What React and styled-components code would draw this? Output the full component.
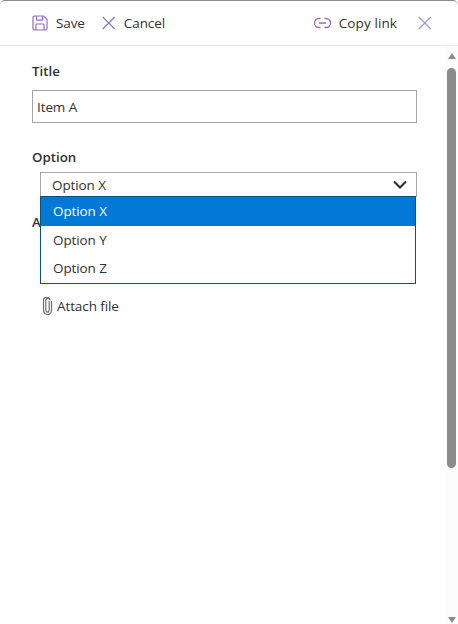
import React from 'react';
import styled, { createGlobalStyle } from 'styled-components';

const GlobalStyle = createGlobalStyle`
  html, body {
    margin: 0;
    padding: 0;
    background: #fff;
  }
  body {
    font-family: "Open Sans", "Noto Sans", "Liberation Sans", sans-serif;
    color: #323130;
  }
`;

const Panel = styled.div`
  width: 458px;
  height: 624px;
  box-sizing: border-box;
  background: #fff;
  border-top: 1px solid #8a8a8a;
  border-radius: 5px 5px 0 0;
  display: flex;
  flex-direction: column;
  overflow: hidden;
`;

const Toolbar = styled.div`
  height: 45px;
  flex: none;
  box-sizing: border-box;
  border-bottom: 1px solid #e8e8e8;
  padding: 0 26px 0 32px;
  display: flex;
  align-items: center;
  justify-content: space-between;
`;

const ToolGroup = styled.div`
  display: flex;
  align-items: center;
`;

const ToolButton = styled.div`
  display: flex;
  align-items: center;
  gap: 8px;
  margin-right: ${(p) => p.$after || 0}px;
  font-size: 13.5px;
  letter-spacing: ${(p) => p.$spacing || -0.1}px;
  line-height: 18px;
  color: #323130;
`;

const Body = styled.div`
  flex: 1;
  display: flex;
  min-height: 0;
`;

const Content = styled.div`
  flex: 1;
  box-sizing: border-box;
  padding: 16px 28px 0 32px;
`;

const Label = styled.div`
  font-size: 13.3px;
  font-weight: 600;
  line-height: 18px;
  color: #323130;
`;

const TextInput = styled.div`
  margin-top: 10px;
  height: 33px;
  box-sizing: border-box;
  border: 1px solid #a6a6a6;
  padding: 0 4px;
  display: flex;
  align-items: center;
  font-size: 13.5px;
  letter-spacing: -0.1px;
  color: #323130;
`;

const OptionField = styled.div`
  margin-top: 25px;
`;

const SelectWrap = styled.div`
  position: relative;
  margin: 6px 0 0 8px;
`;

const SelectBox = styled.div`
  height: 25px;
  box-sizing: border-box;
  border: 1px solid #a6a6a6;
  padding: 0 9px 0 11px;
  display: flex;
  align-items: center;
  justify-content: space-between;
  font-size: 13.5px;
  letter-spacing: -0.1px;
  color: #323130;
`;

const DropList = styled.ul`
  position: absolute;
  top: 24px;
  left: 0;
  right: 1px;
  margin: 0;
  padding: 0;
  list-style: none;
  background: #fff;
  border: 1px solid #05527f;
  box-sizing: border-box;
  height: 88px;
  z-index: 5;
`;

const DropItem = styled.li`
  height: ${(p) => (p.$selected ? 29 : 28)}px;
  box-sizing: border-box;
  padding-left: 12px;
  padding-bottom: 1px;
  display: flex;
  align-items: center;
  font-size: 13.5px;
  letter-spacing: -0.1px;
  background: ${(p) => (p.$selected ? '#0078d4' : 'transparent')};
  color: ${(p) => (p.$selected ? '#fff' : '#323130')};
`;

const HiddenLabel = styled(Label)`
  margin-top: 16px;
`;

const AttachRow = styled.div`
  margin: 66px 0 0 10px;
  display: flex;
  align-items: center;
  gap: 4px;
  font-size: 13.5px;
  letter-spacing: -0.1px;
  line-height: 18px;
  color: #323130;
`;

const ScrollTrack = styled.div`
  width: 13px;
  flex: none;
  background: #fcfcfc;
  display: flex;
  flex-direction: column;
  align-items: center;
  box-sizing: border-box;
`;

const ArrowUp = styled.div`
  margin-top: 7px;
  width: 0;
  height: 0;
  border-left: 4.5px solid transparent;
  border-right: 4.5px solid transparent;
  border-bottom: 6px solid #8c8c8c;
`;

const Thumb = styled.div`
  margin-top: 9px;
  width: 9px;
  height: 400px;
  background: #8c8c8c;
  border-radius: 5px;
`;

const ArrowDown = styled.div`
  margin-top: auto;
  margin-bottom: 1px;
  width: 0;
  height: 0;
  border-left: 4.5px solid transparent;
  border-right: 4.5px solid transparent;
  border-top: 6px solid #8c8c8c;
`;

const SaveIcon = () => (
  <svg width="16" height="16" viewBox="0 0 16 16" fill="none" stroke="#8c6fc4" strokeWidth="1.2">
    <path d="M1 2.6A1.6 1.6 0 0 1 2.6 1h9L15 4.4v9A1.6 1.6 0 0 1 13.4 15H2.6A1.6 1.6 0 0 1 1 13.4Z" />
    <path d="M4.5 1v3.4a.8.8 0 0 0 .8.8h4.6a.8.8 0 0 0 .8-.8V1" />
    <path d="M4 15V9.8a.8.8 0 0 1 .8-.8h6.4a.8.8 0 0 1 .8.8V15" />
  </svg>
);

const CrossIcon = ({ color }) => (
  <svg width="14" height="14" viewBox="0 0 14 14" fill="none" stroke={color} strokeWidth="1.1">
    <path d="M.8 1l12 12M12.8 1l-12 12" />
  </svg>
);

const LinkIcon = () => (
  <svg width="17" height="12" viewBox="0 0 17 12" fill="none" stroke="#8c6fc4" strokeWidth="1.3">
    <path d="M6.5 1.5H5a4.2 4.2 0 0 0 0 9h1.5" />
    <path d="M10.5 1.5H12a4.2 4.2 0 0 1 0 9h-1.5" />
    <path d="M5 6h7" />
  </svg>
);

const ChevronIcon = () => (
  <svg width="14" height="9" viewBox="0 0 14 9" fill="none" stroke="#2b2b2b" strokeWidth="2">
    <path d="M1 1.5l6 6 6-6" />
  </svg>
);

const ClipIcon = () => (
  <svg width="11" height="18" viewBox="0 0 11 18" fill="none" stroke="#6f6f6f" strokeWidth="1.2">
    <path d="M7.2 4v9.4a1.7 1.7 0 0 1-3.4 0V3.4a2 2 0 0 1 4 0" />
    <path d="M9.5 4v9.5a4 4 0 0 1-8 0V3.6a3.1 3.1 0 0 1 6.2-.6" />
  </svg>
);

const options = ['Option X', 'Option Y', 'Option Z'];

export default function App() {
  return (
    <>
      <GlobalStyle />
      <Panel>
        <Toolbar>
          <ToolGroup>
            <ToolButton $after={17}>
              <SaveIcon />
              Save
            </ToolButton>
            <ToolButton>
              <CrossIcon color="#7f77c9" />
              Cancel
            </ToolButton>
          </ToolGroup>
          <ToolGroup>
            <ToolButton $after={21} $spacing={0.1}>
              <LinkIcon />
              Copy link
            </ToolButton>
            <CrossIcon color="#a193d3" />
          </ToolGroup>
        </Toolbar>
        <Body>
          <Content>
            <Label>Title</Label>
            <TextInput>Item A</TextInput>
            <OptionField>
              <Label>Option</Label>
              <SelectWrap>
                <SelectBox>
                  Option X
                  <ChevronIcon />
                </SelectBox>
                <DropList>
                  {options.map((o, i) => (
                    <DropItem key={o} $selected={i === 0}>{o}</DropItem>
                  ))}
                </DropList>
              </SelectWrap>
            </OptionField>
            <HiddenLabel>Attachments</HiddenLabel>
            <AttachRow>
              <ClipIcon />
              Attach file
            </AttachRow>
          </Content>
          <ScrollTrack>
            <ArrowUp />
            <Thumb />
            <ArrowDown />
          </ScrollTrack>
        </Body>
      </Panel>
    </>
  );
}
